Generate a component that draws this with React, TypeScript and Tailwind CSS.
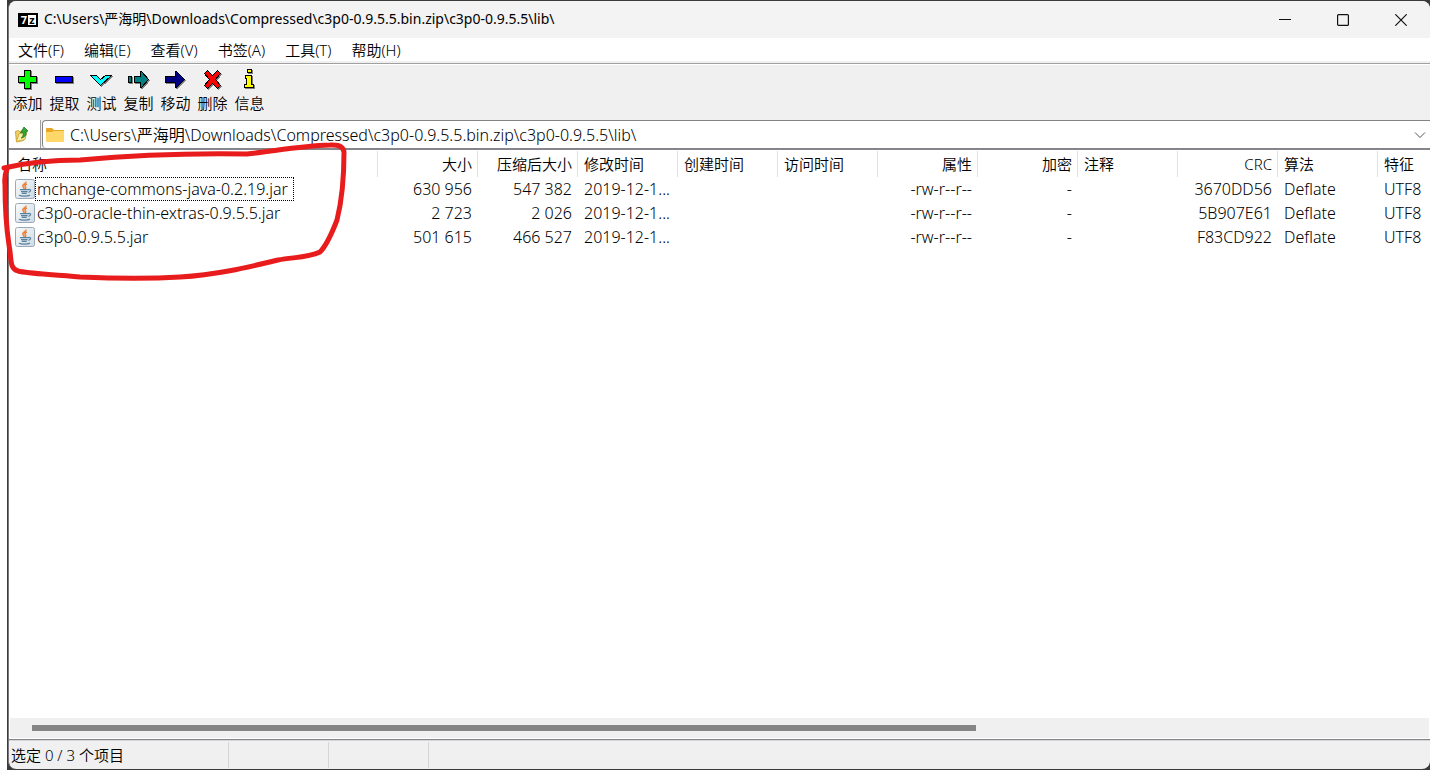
import React from "react";

const PATH = "C:\\Users\\严海明\\Downloads\\Compressed\\c3p0-0.9.5.5.bin.zip\\c3p0-0.9.5.5\\lib\\";

const MENUS = ["文件(F)", "编辑(E)", "查看(V)", "书签(A)", "工具(T)", "帮助(H)"];

function ToolIcon({ children }: { children: React.ReactNode }) {
  return (
    <svg viewBox="0 0 24 24" className="h-6 w-6" shapeRendering="crispEdges" aria-hidden="true">
      {children}
    </svg>
  );
}

function Shape({ d, fill }: { d: string; fill: string }) {
  return (
    <>
      <path d={d} transform="translate(1 1)" fill="#808080" stroke="#808080" />
      <path d={d} fill={fill} stroke="#000" />
    </>
  );
}

const TOOLS = [
  { label: "添加", fill: "#00ff00", paths: ["M8.5 2.5h6v6h6v6h-6v6h-6v-6h-6v-6h6z"] },
  { label: "提取", fill: "#0000ff", paths: ["M2.5 8.5h17v6h-17z"] },
  { label: "测试", fill: "#00ffff", paths: ["M.5 7.5h6l4 4 5-4h6l-11 10z"] },
  { label: "复制", fill: "#008080", paths: ["M1.5 8.5h3v6h-3z", "M7.5 8.5h6v-5h1l7 8-7 8h-1v-5h-6z"] },
  { label: "移动", fill: "#000080", paths: ["M1.5 8.5h10v-5h1l8 8-8 8h-1v-5h-10z"] },
  {
    label: "删除",
    fill: "#ff0000",
    paths: ["M3.5 5.5l3-3 5 5 5-5 3 3-5 6 5 6-3 3-5-5-5 5-3-3 5-6z"],
  },
  { label: "信息", fill: "#ffff00", paths: ["M9.5 1.5h4v3h-4z", "M7.5 7.5h6v9h2v3h-9v-3h2v-6h-1z"] },
];

const COLUMNS = [
  { name: "名称", right: false, width: "w-[369px]" },
  { name: "大小", right: true, width: "w-[100px]" },
  { name: "压缩后大小", right: true, width: "w-[100px]" },
  { name: "修改时间", right: false, width: "w-[100px]" },
  { name: "创建时间", right: false, width: "w-[100px]" },
  { name: "访问时间", right: false, width: "w-[100px]" },
  { name: "属性", right: true, width: "w-[100px]" },
  { name: "加密", right: true, width: "w-[100px]" },
  { name: "注释", right: false, width: "w-[100px]" },
  { name: "CRC", right: true, width: "w-[100px]" },
  { name: "算法", right: false, width: "w-[100px]" },
  { name: "特征", right: false, width: "" },
];

const FILES = [
  ["mchange-commons-java-0.2.19.jar", "630 956", "547 382", "2019-12-1...", "", "", "-rw-r--r--", "-", "", "3670DD56", "Deflate", "UTF8"],
  ["c3p0-oracle-thin-extras-0.9.5.5.jar", "2 723", "2 026", "2019-12-1...", "", "", "-rw-r--r--", "-", "", "5B907E61", "Deflate", "UTF8"],
  ["c3p0-0.9.5.5.jar", "501 615", "466 527", "2019-12-1...", "", "", "-rw-r--r--", "-", "", "F83CD922", "Deflate", "UTF8"],
];

function JarIcon() {
  return (
    <svg viewBox="0 0 20 20" className="h-5 w-5 shrink-0" aria-hidden="true">
      <defs>
        <linearGradient id="jar" x1="0" y1="0" x2="1" y2="1">
          <stop offset="0" stopColor="#fbfcfd" />
          <stop offset="1" stopColor="#cdd9e2" />
        </linearGradient>
      </defs>
      <rect x=".5" y=".5" width="19" height="19" rx="2" fill="url(#jar)" stroke="#9aa9b6" />
      <path d="M11 2.500c.5 2-3.700 2.800-3.200 4.700.2.900 1.500 1.500 1.300 2.800M12 5c-2.200 1-2.600 1.800-1.600 2.800.6.700.2 1.400-.4 1.900" fill="none" stroke="#ee8236" strokeWidth="1.500" />
      <path d="M5 10.700h8.500M6 12.600h6.500M6.700 14.300h5M4 16.200c2.500 1.200 8.500 1.200 11-.3M13.500 10.500c3-.4 2.700 2.300-.2 2.800" fill="none" stroke="#56809f" strokeWidth="1.200" />
    </svg>
  );
}

function FolderIcon() {
  return (
    <svg viewBox="0 0 20 16" className="h-4 w-5 shrink-0" aria-hidden="true">
      <path d="M1 2q0-1 1-1h5l2 2h9q1 0 1 1v9H1z" fill="#e8a824" />
      <path d="M1 6q0-1 1-1h5l2-1h9q1 0 1 1v9q0 1-1 1H2q-1 0-1-1z" fill="#ffd768" />
    </svg>
  );
}

function UpFolderIcon() {
  return (
    <svg viewBox="0 0 16 18" className="h-[18px] w-4" aria-hidden="true">
      <path d="M1.500 6.500l3-1 1 1 4-1v10l-7 1.500z" fill="#f0d268" stroke="#c9a53a" />
      <path d="M2.500 16.500l2.500-8 8-2-2 8z" fill="#fbeb9e" stroke="#cfae48" />
      <path d="M7 13c2-1 2.500-2.500 2-5.500l-2.500.5 3.500-6 4 4-2 .5c.5 4-1 6-5 6.500z" fill="#35a535" stroke="#1c7a25" strokeWidth=".8" />
    </svg>
  );
}

export default function App() {
  return (
    <div className="flex min-h-screen bg-white pl-[7px] font-['Noto_Sans','Noto_Sans_CJK_SC',sans-serif] text-[15px] leading-5 font-[350] text-black">
      <div className="flex min-w-0 flex-1 flex-col bg-[#3a3a3c] py-px pl-px">
        <div className="relative flex min-w-0 flex-1 flex-col overflow-hidden rounded-lg border-l border-[#77777c] bg-[#f0f0f0]">
          <header className="flex h-[37px] items-center bg-[#f3f3f3] pl-[9px]">
            <span className="flex h-[14px] w-5 shrink-0 border-2 border-black bg-white text-[11px] leading-[10px] font-bold" aria-hidden="true">
              <span className="w-2 bg-black text-center text-white">7</span>
              <span className="w-2 text-center">z</span>
            </span>
            <h1 className="ml-1.5 flex-1 truncate pb-px text-[14px] font-normal">{PATH}</h1>
            <div className="flex">
              <button type="button" aria-label="最小化" className="flex h-[36px] w-[58px] items-center justify-center">
                <svg viewBox="0 0 12 12" className="h-3 w-3" stroke="#111"><path d="M0 5.500h12" /></svg>
              </button>
              <button type="button" aria-label="最大化" className="flex h-[36px] w-[58px] items-center justify-center">
                <svg viewBox="0 0 12 12" className="h-3 w-3" stroke="#111" fill="none"><rect x=".6" y=".6" width="10.800" height="10.800" rx="1" strokeWidth="1.200" /></svg>
              </button>
              <button type="button" aria-label="关闭" className="flex h-[36px] w-[58px] items-center justify-center">
                <svg viewBox="0 0 12 12" className="h-3 w-3" stroke="#111"><path d="M.3.300l11.400 11.400M11.700.300L.3 11.700" strokeWidth="1.200" /></svg>
              </button>
            </div>
          </header>

          <nav className="flex h-[23px] items-center gap-0.5 bg-white">
            {MENUS.map((m) => (
              <button key={m} type="button" className="px-[9px]">{m}</button>
            ))}
          </nav>
          <div className="h-1 border-b border-white bg-[#f0f0f0]">
            <div className="h-[3px] border-b border-[#a0a0a0]" />
          </div>

          <div className="flex h-[55px] pt-[3px]">
            {TOOLS.map((t) => (
              <button key={t.label} type="button" className="flex w-[37px] flex-col items-center">
                <ToolIcon>
                  {t.paths.map((d) => (
                    <Shape key={d} d={d} fill={t.fill} />
                  ))}
                </ToolIcon>
                <span className="pt-px">{t.label}</span>
              </button>
            ))}
          </div>

          <div className="flex h-[28px]">
            <button type="button" aria-label="上一级" className="flex w-8 items-center justify-start border-r border-[#a0a0a0] bg-white pl-[5px]">
              <UpFolderIcon />
            </button>
            <div className="ml-px flex flex-1 items-center rounded-l-sm border-t border-l border-[#828287] bg-white pl-0.5 text-[16px]">
              <FolderIcon />
              <input aria-label="路径" readOnly value={PATH} className="ml-[5px] h-6 min-w-0 flex-1 bg-transparent pb-0.5 outline-none" />
              <button type="button" aria-label="展开" className="pr-1">
                <svg viewBox="0 0 12 8" className="h-2 w-3" fill="none" stroke="#555"><path d="M1 1.500l5 5 5-5" /></svg>
              </button>
            </div>
          </div>

          <main className="flex flex-1 flex-col border-t-2 border-b border-[#85858b] bg-white">
            <table className="w-full table-fixed border-collapse">
              <thead>
                <tr className="h-[27px]">
                  {COLUMNS.map((c) => (
                    <th key={c.name} scope="col" className={`${c.width} p-0 pt-px font-[350]`}>
                      <div className={`h-[26px] truncate border-[#e0e0e0] pt-[3px] ${c.right ? "pr-[5px] text-right" : "text-left"} ${c.width ? "border-r" : ""} ${c.name === "名称" ? "pl-2" : "pl-1.5"}`}>
                        {c.name}
                      </div>
                    </th>
                  ))}
                </tr>
              </thead>
              <tbody className="text-[16px]">
                {FILES.map((row, r) => (
                  <tr key={row[0]} className="h-6">
                    {row.map((cell, i) =>
                      i === 0 ? (
                        <td key={i} className="p-0">
                          <div className="flex h-6 items-center pl-1.5">
                            <JarIcon />
                            <span className={`h-6 border border-dotted pr-[5px] pl-px leading-[22px] ${r === 0 ? "border-black" : "border-transparent"}`}>{cell}</span>
                          </div>
                        </td>
                      ) : (
                        <td key={i} className={`truncate p-0 px-1.5 ${COLUMNS[i].right ? "text-right" : "text-left"}`}>{cell}</td>
                      )
                    )}
                  </tr>
                ))}
              </tbody>
            </table>
            <div className="mt-auto mr-px mb-px ml-px h-5 bg-[#f0f0f0] pt-[7px] pl-[22px]">
              <div className="h-1.5 w-[944px] max-w-full bg-[#858585]" />
            </div>
          </main>

          <footer className="flex h-[29px] items-stretch border-t border-[#d5d5d5]">
            <span className="my-px flex w-[220px] items-center border-r border-[#d5d5d5] pl-0.5">选定 0 / 3 个项目</span>
            <span className="my-px w-[100px] border-r border-[#d5d5d5]" />
            <span className="my-px w-[100px] border-r border-[#d5d5d5]" />
          </footer>
        </div>
      </div>

      <svg className="pointer-events-none absolute top-[140px] left-0 h-[145px] w-[360px]" viewBox="0 0 360 145" fill="none" stroke="#e81c1c" strokeWidth="5" strokeLinecap="round" strokeLinejoin="round" aria-hidden="true">
        <path d="M4 28C25 23 45 20 80 20C135 15 190 13 247 14C275 11 300 6 330 5Q343 4 344 12C344 35 342 60 337 80C332 93 327 105 320 112C307 118 294 117 278 120C245 128 215 135 180 137C145 139 105 138 80 137C52 134 30 134 18 131C9 128 12 120 9 105C6 85 5 62 5 45Q4 36 7 29" />
      </svg>
    </div>
  );
}
